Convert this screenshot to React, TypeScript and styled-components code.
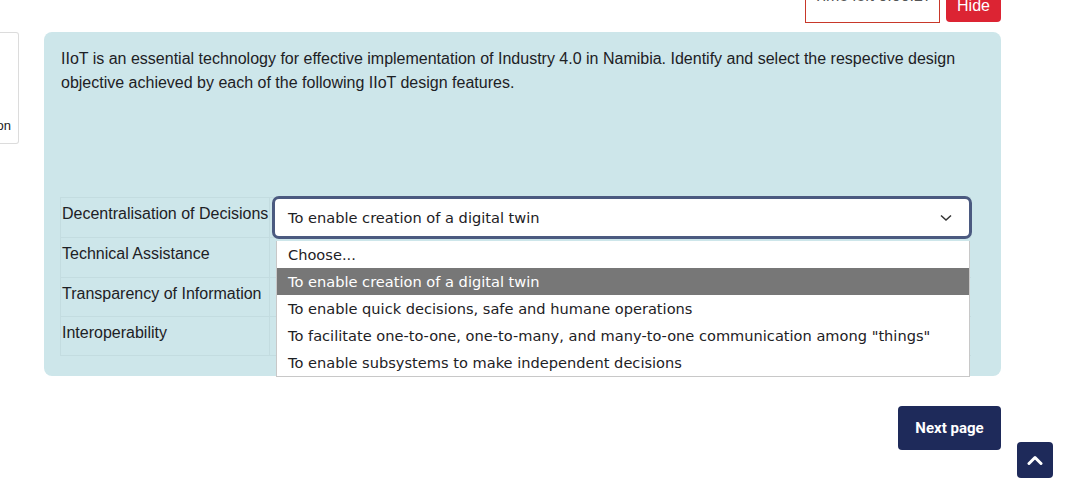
import styled, { createGlobalStyle } from "styled-components";

const GlobalStyle = createGlobalStyle`
  html, body {
    margin: 0;
    padding: 0;
    background: #ffffff;
    font-family: "Liberation Sans", Arial, sans-serif;
    overflow: hidden;
  }
`;

const Page = styled.div`
  width: 1076px;
  height: 488px;
  position: relative;
  overflow: hidden;
`;

const TopBar = styled.div`
  display: flex;
  justify-content: flex-end;
  align-items: flex-start;
  gap: 6px;
  width: 1001px;
  margin-top: -16px;
  height: 39px;
`;

const Timer = styled.div`
  width: 135px;
  height: 39px;
  box-sizing: border-box;
  border: 1px solid #c8382a;
  border-top: none;
  display: flex;
  align-items: center;
  justify-content: center;
  font-size: 16px;
  color: #555;
  padding-bottom: 14px;
`;

const HideButton = styled.button`
  width: 55px;
  height: 38px;
  border: none;
  border-radius: 4px;
  background: #dc2433;
  color: #fff;
  font-family: "Liberation Sans", Arial, sans-serif;
  font-size: 16px;
  padding: 0;
  padding-top: 6px;
`;

const Body = styled.div`
  display: flex;
  align-items: flex-start;
  gap: 25px;
  margin-top: 9px;
`;

const SideBlock = styled.div`
  width: 19px;
  height: 112px;
  box-sizing: border-box;
  border: 1px solid #dcdcdc;
  border-left: none;
  border-radius: 0 3px 3px 0;
  overflow: hidden;
  display: flex;
  justify-content: flex-end;
  align-items: flex-end;
  padding-bottom: 10px;
`;

const SideText = styled.span`
  white-space: nowrap;
  font-size: 13px;
  color: #222;
  padding-right: 7px;
`;

const Main = styled.div`
  display: flex;
  flex-direction: column;
  align-items: flex-end;
`;

const Panel = styled.div`
  width: 957px;
  height: 344px;
  box-sizing: border-box;
  background: #cde6ea;
  border-radius: 8px;
  padding: 15px 17px 0 17px;
  display: flex;
  flex-direction: column;
  align-items: flex-start;
`;

const Question = styled.p`
  margin: 0;
  font-size: 16px;
  line-height: 24px;
  color: #1d2125;
  width: 910px;
`;

const Table = styled.table`
  border-collapse: collapse;
  table-layout: fixed;
  width: 911px;
  margin-top: 102px;
  margin-left: -1px;
`;

const Row = styled.tr`
  border-top: 1px solid #c3dce0;
  border-bottom: 1px solid #c3dce0;
`;

const LabelCell = styled.td<{ $h: number }>`
  width: 209px;
  height: ${(p) => p.$h}px;
  box-sizing: border-box;
  padding: 7px 0 0 1px;
  vertical-align: top;
  font-size: 16px;
  color: #1d2125;
  border-left: 1px solid #c3dce0;
  border-right: 1px solid #c3dce0;
  white-space: nowrap;
`;

const SelectCell = styled.td`
  padding: 0;
  vertical-align: top;
  position: relative;
`;

const SelectBox = styled.div`
  width: 700px;
  height: 43px;
  box-sizing: border-box;
  margin: -2px 0 -4px 2px;
  border: 3px solid #4b5a80;
  border-radius: 7px;
  background: #fff;
  display: flex;
  align-items: center;
  justify-content: space-between;
  padding: 0 17px 0 13px;
  font-family: "DejaVu Sans", "Liberation Sans", sans-serif;
  font-size: 14.6px;
  color: #1d2125;
`;

const OptionList = styled.div`
  position: absolute;
  left: 6px;
  top: 43px;
  width: 694px;
  background: #fff;
  border: 1px solid #c8c8c8;
  border-top: none;
  box-sizing: border-box;
  z-index: 2;
`;

const Option = styled.div<{ $active?: boolean }>`
  height: 27px;
  line-height: 27px;
  padding-left: 11px;
  font-family: "DejaVu Sans", "Liberation Sans", sans-serif;
  font-size: 14.6px;
  white-space: nowrap;
  color: ${(p) => (p.$active ? "#fff" : "#1d2125")};
  background: ${(p) => (p.$active ? "#777777" : "#fff")};
`;

const NextButton = styled.button`
  margin-top: 30px;
  width: 103px;
  height: 44px;
  border: none;
  border-radius: 4px;
  background: #1e2a5a;
  color: #fff;
  font-family: Roboto, "Liberation Sans", sans-serif;
  font-weight: 700;
  font-size: 15px;
  padding: 0;
`;

const ScrollTop = styled.button`
  position: fixed;
  right: 23px;
  bottom: 10px;
  width: 36px;
  height: 36px;
  border: none;
  border-radius: 4px;
  background: #1e2a5a;
  display: flex;
  align-items: center;
  justify-content: center;
  padding: 0;
`;

const rows = [
  { label: "Decentralisation of Decisions", h: 40 },
  { label: "Technical Assistance", h: 40 },
  { label: "Transparency of Information", h: 39 },
  { label: "Interoperability", h: 39 },
];

const options = [
  "Choose...",
  "To enable creation of a digital twin",
  "To enable quick decisions, safe and humane operations",
  'To facilitate one-to-one, one-to-many, and many-to-one communication among "things"',
  "To enable subsystems to make independent decisions",
];

export default function App() {
  return (
    <Page>
      <GlobalStyle />
      <TopBar>
        <Timer>Time left 0:00:27</Timer>
        <HideButton>Hide</HideButton>
      </TopBar>
      <Body>
        <SideBlock>
          <SideText>Quiz navigation</SideText>
        </SideBlock>
        <Main>
          <Panel>
            <Question>
              IIoT is an essential technology for effective implementation of Industry 4.0 in Namibia. Identify and
              select the respective design objective achieved by each of the following IIoT design features.
            </Question>
            <Table>
              <tbody>
                {rows.map((r, i) => (
                  <Row key={r.label}>
                    <LabelCell $h={r.h}>{r.label}</LabelCell>
                    <SelectCell>
                      {i === 0 && (
                        <>
                          <SelectBox>
                            <span>To enable creation of a digital twin</span>
                            <svg width="12" height="8" viewBox="0 0 12 8">
                              <path d="M1 1.5 L6 6 L11 1.5" fill="none" stroke="#333" strokeWidth="1.5" />
                            </svg>
                          </SelectBox>
                          <OptionList>
                            {options.map((o, j) => (
                              <Option key={o} $active={j === 1}>
                                {o}
                              </Option>
                            ))}
                          </OptionList>
                        </>
                      )}
                    </SelectCell>
                  </Row>
                ))}
              </tbody>
            </Table>
          </Panel>
          <NextButton>Next page</NextButton>
        </Main>
      </Body>
      <ScrollTop>
        <svg width="16" height="10" viewBox="0 0 16 10">
          <path d="M2 8.5 L8 2.5 L14 8.5" fill="none" stroke="#fff" strokeWidth="3" strokeLinecap="round" strokeLinejoin="round" />
        </svg>
      </ScrollTop>
    </Page>
  );
}
